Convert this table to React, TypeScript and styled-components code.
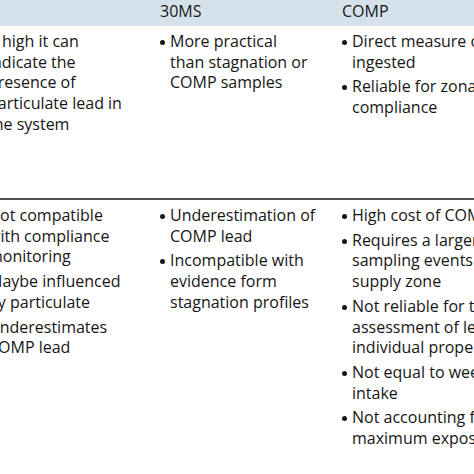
import styled, { createGlobalStyle } from 'styled-components';

type Item = string[];
type Cell = Item[];

const columns = ['', '30MS', 'COMP'];

const rows: { minHeight: number; cells: Cell[] }[] = [
  {
    minHeight: 172,
    cells: [
      [['If high it can', 'indicate the', 'presence of', 'particulate lead in', 'the system']],
      [['More practical', 'than stagnation or', 'COMP samples']],
      [
        ['Direct measure of lead', 'ingested'],
        ['Reliable for zonal', 'compliance'],
      ],
    ],
  },
  {
    minHeight: 0,
    cells: [
      [
        ['Not compatible', 'with compliance', 'monitoring'],
        ['Maybe influenced', 'by particulate'],
        ['Underestimates', 'COMP lead'],
      ],
      [
        ['Underestimation of', 'COMP lead'],
        ['Incompatible with', 'evidence form', 'stagnation profiles'],
      ],
      [
        ['High cost of COMP'],
        ['Requires a larger number of', 'sampling events per water', 'supply zone'],
        ['Not reliable for the', 'assessment of lead at', 'individual properties'],
        ['Not equal to weekly', 'intake'],
        ['Not accounting for', 'maximum exposure'],
      ],
    ],
  },
];

/** comparison table of sampling methods */
export default function App() {
  return (
    <>
      <GlobalStyle />
      <Table>
        <HeaderRow>
          {columns.map((title, i) => (
            <HeaderCell key={i}>{title}</HeaderCell>
          ))}
        </HeaderRow>
        {rows.map((row, r) => (
          <BodyRow key={r} $minHeight={row.minHeight} $ruled={r > 0}>
            {row.cells.map((cell, c) => (
              <BodyCell key={c}>
                {cell.map((item, i) => (
                  <ListItem key={i}>
                    <Bullet />
                    <ItemText>
                      {item.map((line, l) => (
                        <Line key={l}>{line}</Line>
                      ))}
                    </ItemText>
                  </ListItem>
                ))}
              </BodyCell>
            ))}
          </BodyRow>
        ))}
      </Table>
    </>
  );
}

const GlobalStyle = createGlobalStyle`
  html, body {
    margin: 0;
    padding: 0;
    overflow: hidden;
    background: #ffffff;
  }

  body {
    font-family: 'Open Sans', 'Noto Sans', sans-serif;
    color: #161616;
  }
`;

const Table = styled.div`
  display: flex;
  flex-direction: column;
  width: 546px;
  margin-left: -22px;
  font-size: 16px;
`;

const Row = styled.div`
  display: grid;
  grid-template-columns: repeat(3, 182px);
`;

const HeaderRow = styled(Row)`
  height: 26px;
  background-color: #d5e2ec;
`;

const HeaderCell = styled.div`
  line-height: 22px;
  white-space: nowrap;
`;

const BodyRow = styled(Row)<{ $minHeight: number; $ruled: boolean }>`
  min-height: ${({ $minHeight }) => $minHeight}px;
  box-sizing: border-box;
  padding-top: 5px;
  border-top: ${({ $ruled }) => ($ruled ? '2px solid #4d4d4d' : 'none')};
`;

const BodyCell = styled.div`
  display: flex;
  flex-direction: column;
  gap: 4px;
`;

const ListItem = styled.div`
  display: flex;
  line-height: 20.7px;
`;

const Bullet = styled.span`
  position: relative;
  flex: 0 0 10px;
  height: 20.7px;

  &::before {
    content: '';
    position: absolute;
    top: 9px;
    left: 0;
    width: 5px;
    height: 5px;
    border-radius: 50%;
    background-color: #161616;
  }
`;

const ItemText = styled.div`
  display: flex;
  flex-direction: column;
`;

const Line = styled.span`
  white-space: nowrap;
`;
